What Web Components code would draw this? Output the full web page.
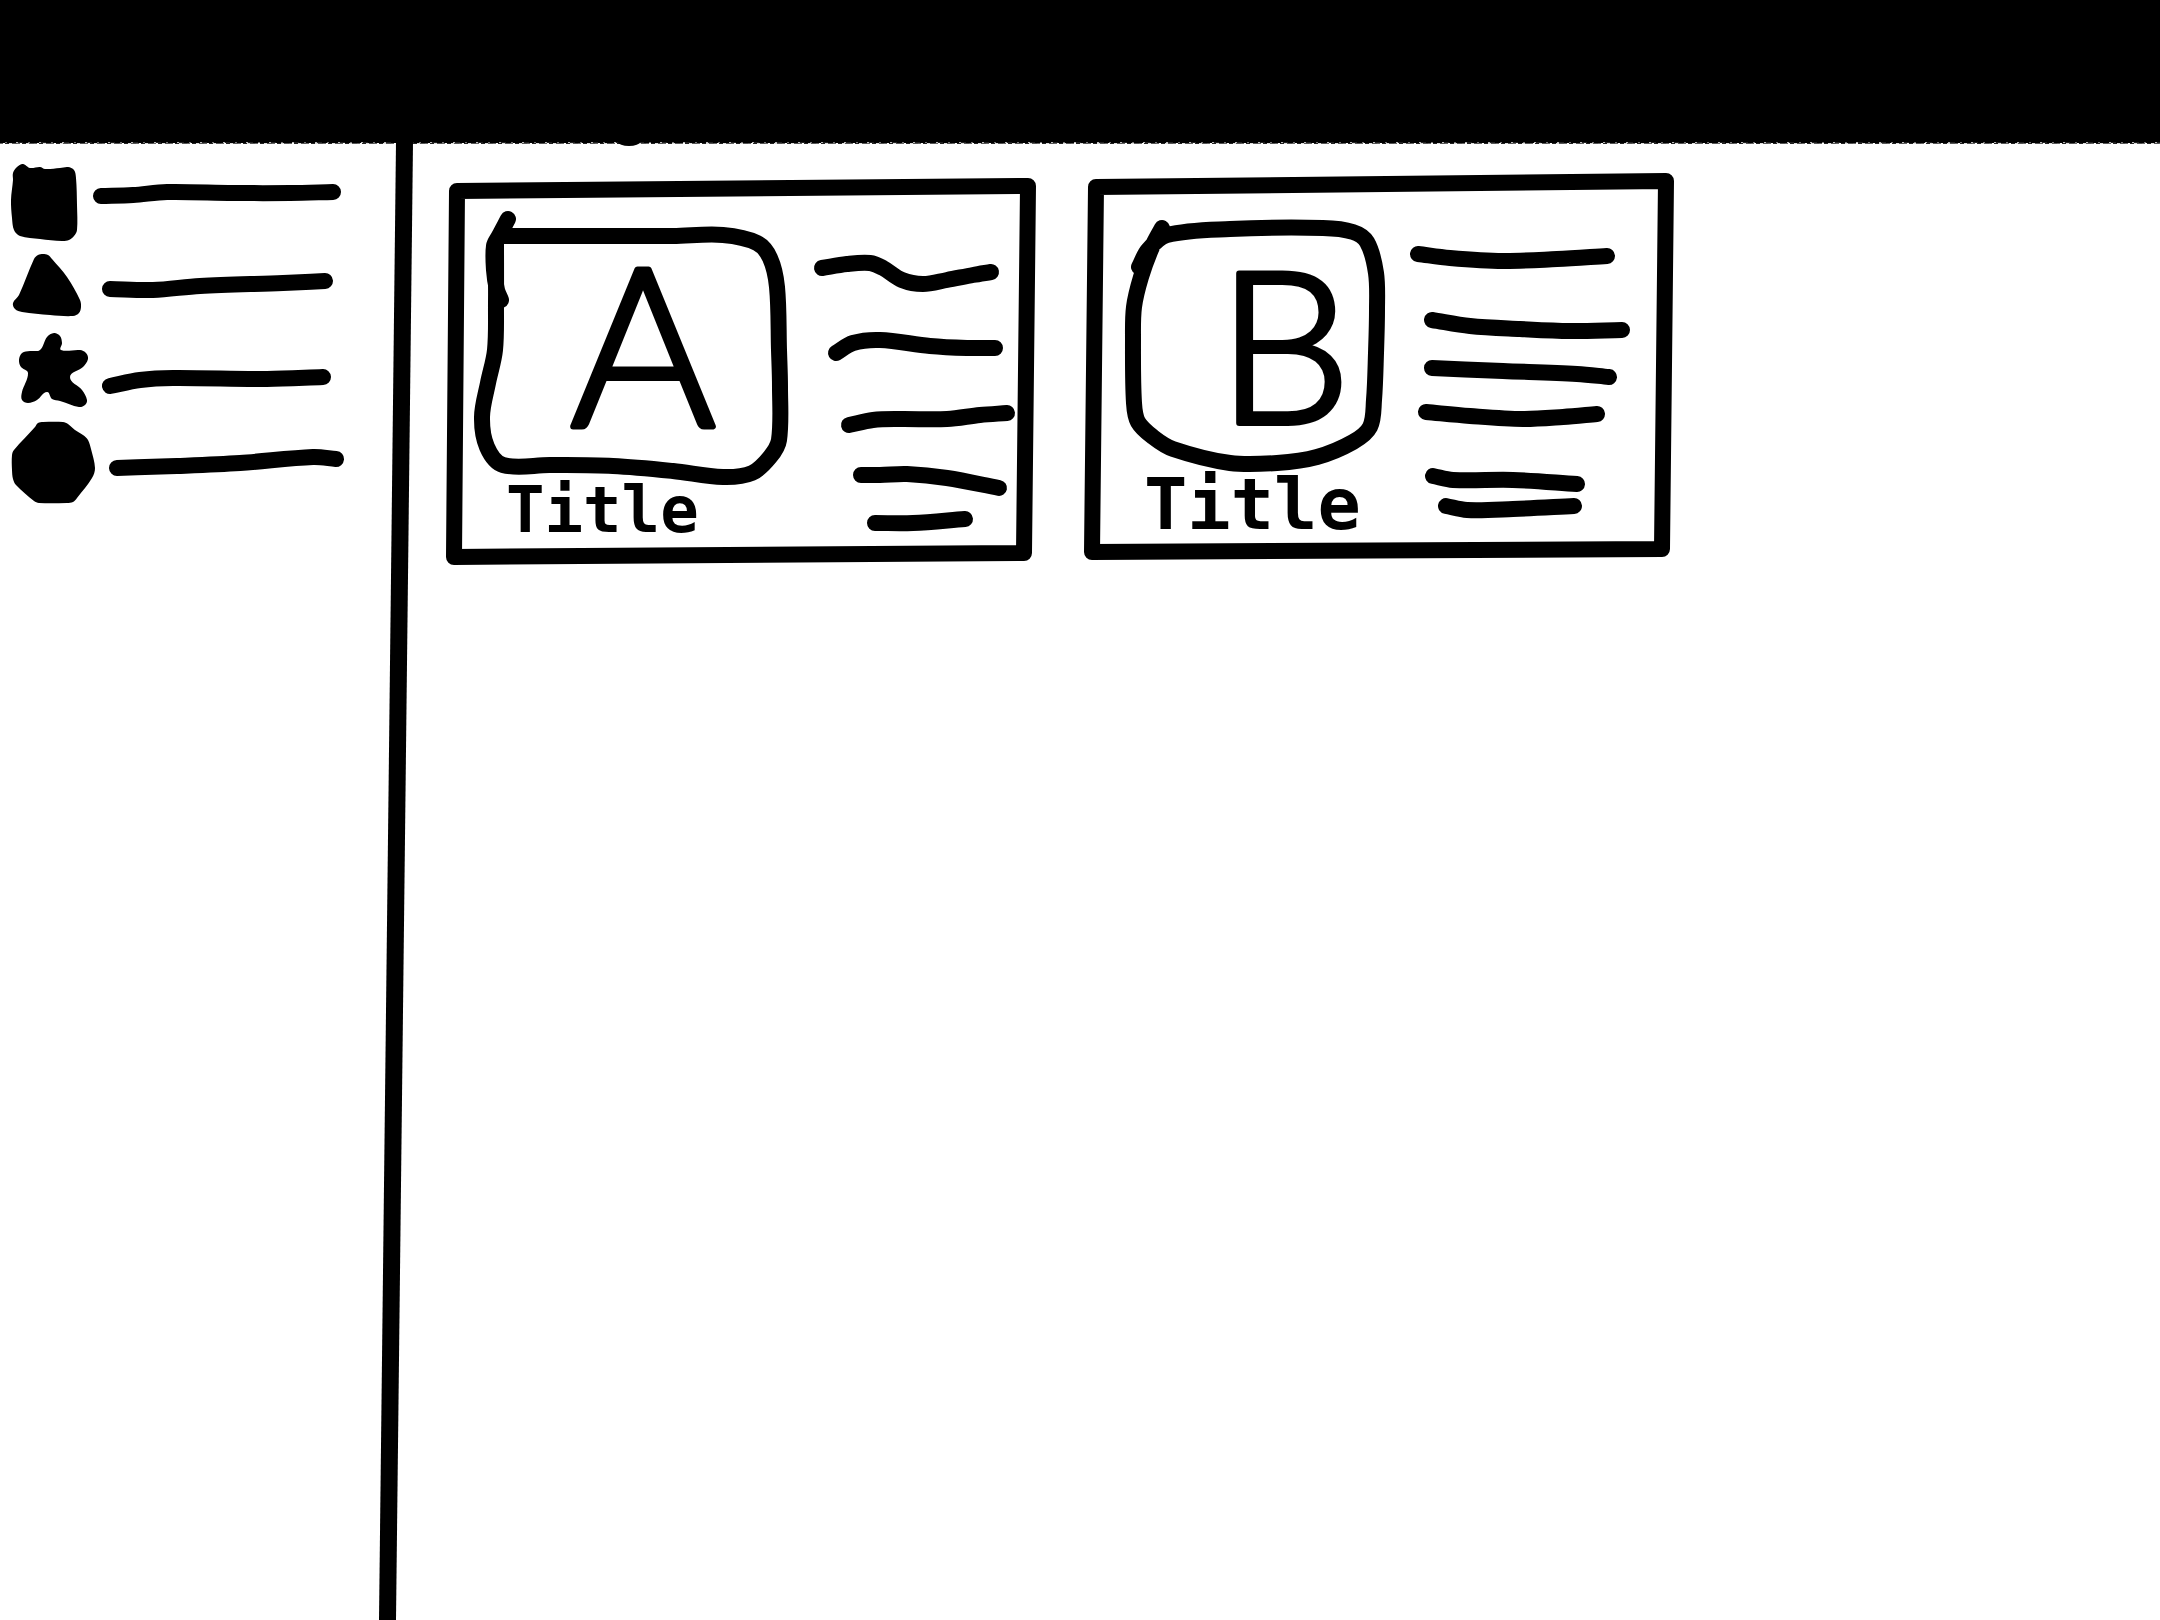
<!DOCTYPE html>
<html lang="en">
<head>
<meta charset="utf-8">
<title>Wireframe</title>
<style>
body { margin: 0; background: #fff; color: #000; font-family: "DejaVu Sans Mono", monospace; }
</style>
</head>
<body>
<wire-page>
  <wire-topbar slot="top"></wire-topbar>
  <wire-item slot="nav">
    <ink-art slot="icon" box="10 160 80 88" fill="13,173 17,167 23,164 30,168 40,167 45,169 60,168 68,167 74,170 76,178 77,205 77,230 74,236 69,240 62,241 40,239 20,236 14,230 12,218 11,200 13,180"></ink-art>
    <ink-art box="90 160 260 88" strokes="101,196 133,195 167,192 233,193 290,193 333,192"></ink-art>
  </wire-item>
  <wire-item slot="nav">
    <ink-art slot="icon" box="10 248 80 76" fill="34,259 38,255 43,254 48,255 52,259 67,277 80,300 81,307 79,313 73,316 50,315 22,312 15,309 13,303 19,295"></ink-art>
    <ink-art box="90 248 260 76" strokes="110,289 153,290 200,286 283,283 325,281"></ink-art>
  </wire-item>
  <wire-item slot="nav">
    <ink-art slot="icon" box="10 324 80 92" fill="40,350 47,337 54,333 60,336 62,343 61,350 80,350 86,353 88,359 83,367 70,377 82,390 87,400 85,405 79,407 60,401 52,399 47,392 37,400 28,403 22,400 22,392 28,373 21,367 19,360 22,353 30,351"></ink-art>
    <ink-art box="90 324 260 92" strokes="110,386 140,380 173,378 267,379 323,377"></ink-art>
  </wire-item>
  <wire-item slot="nav">
    <ink-art slot="icon" box="10 416 80 94" fill="35,427 38,423 43,422 63,422 68,424 75,430 83,435 88,440 91,449 95,468 92,478 77,498 73,502 67,503 39,503 34,501 16,485 13,479 12,470 12,455 14,450"></ink-art>
    <ink-art box="90 416 260 94" strokes="117,468 177,466 240,463 313,457 336,459"></ink-art>
  </wire-item>

  <wire-card>
    <ink-art slot="frame" box="446 174 592 392" outline="457,191 1028,186 1024,553 454,557"></ink-art>
    <ink-art slot="tile" box="474 208 320 276" letter="A" at="643 427" size="222"
      strokes="508,219 499,236 494,246 494,270 497,290 501,300|505,236 560,236 630,236 673,236 723,235 757,243 770,258 777,287 779,350 780,387 779,440 770,457 752,473 723,477 673,471 613,466 550,465 503,465 487,447 482,417 488,383 495,350 496,303 496,243"></ink-art>
    <span slot="title">Title</span>
    <ink-art slot="text" box="810 208 220 340"
      strokes="822,268 847,264 870,263 883,268 902,280 923,284 947,280 973,275 991,272|836,353 853,343 880,340 930,346 967,348 995,348|849,425 873,420 900,419 947,419 980,415 1007,413|861,475 880,475 907,474 947,478 999,488|875,523 913,523 965,519"></ink-art>
  </wire-card>

  <wire-card size="large">
    <ink-art slot="frame" box="1084 174 592 392" outline="1096,187 1666,181 1662,549 1092,552"></ink-art>
    <ink-art slot="tile" box="1112 208 280 270" letter="B" at="1284 423" size="212"
      strokes="1162,228 1152,247 1141,277 1134,307 1133,340 1134,403 1138,422 1153,437 1173,449 1230,463 1277,463 1317,457 1353,442 1370,427 1374,400 1376,353 1377,310 1376,273 1367,242 1353,232 1323,228 1230,229 1167,235 1148,250 1139,267"></ink-art>
    <span slot="title">Title</span>
    <ink-art slot="text" box="1408 208 260 340"
      strokes="1418,254 1450,258 1503,261 1557,259 1607,256|1432,320 1470,326 1520,329 1570,331 1622,330|1432,368 1503,371 1577,374 1609,377|1426,412 1470,416 1523,419 1563,417 1597,414|1433,476 1453,480 1513,480 1577,484|1446,506 1467,510 1513,509 1574,506"></ink-art>
  </wire-card>
</wire-page>

<script>
const parse = text => text.trim().split(/\s+/).map(pair => pair.split(",").map(Number));

/* Smooth curve through a list of points: each handle is a third of its own segment. */
function curve(points, closed) {
  const n = points.length;
  const pick = i => closed ? points[(i + n) % n] : points[Math.max(0, Math.min(n - 1, i))];
  const length = (p, q) => Math.hypot(q[0] - p[0], q[1] - p[1]);
  let d = `M${points[0]}`;
  for (let i = 0; i < (closed ? n : n - 1); i++) {
    const [a, b, c, e] = [pick(i - 1), pick(i), pick(i + 1), pick(i + 2)];
    const reach = length(b, c) / 3, s = reach / length(a, c), t = reach / length(b, e);
    d += `C${b[0] + (c[0] - a[0]) * s} ${b[1] + (c[1] - a[1]) * s} ${c[0] - (e[0] - b[0]) * t} ${c[1] - (e[1] - b[1]) * t} ${c}`;
  }
  return closed ? d + "Z" : d;
}

/* One marker drawing: filled shapes, strokes, or a straight-sided outline. */
customElements.define("ink-art", class extends HTMLElement {
  connectedCallback() {
    const box = this.getAttribute("box");
    const [, , w, h] = box.split(" ");
    let body = "";
    if (this.hasAttribute("fill")) body += `<path class="fill" d="${curve(parse(this.getAttribute("fill")), true)}"/>`;
    if (this.hasAttribute("outline")) body += `<polygon points="${this.getAttribute("outline")}"/>`;
    for (const s of (this.getAttribute("strokes") || "").split("|")) if (s) body += `<path d="${curve(parse(s), false)}"/>`;
    if (this.hasAttribute("letter")) {
      const [x, y] = this.getAttribute("at").split(" ");
      body += `<text x="${x}" y="${y}" font-size="${this.getAttribute("size")}">${this.getAttribute("letter")}</text>`;
    }
    this.attachShadow({ mode: "open" }).innerHTML = `
      <style>
        :host { display: block; flex: none; }
        svg { display: block; overflow: visible; }
        path, polygon { fill: none; stroke: #000; stroke-width: 16px; stroke-linecap: round; stroke-linejoin: round; }
        .fill { fill: #000; stroke: none; }
        text { font-family: Lato, sans-serif; font-weight: 300; text-anchor: middle; stroke: #000; stroke-width: 6px; stroke-linejoin: round; }
      </style>
      <svg width="${w}" height="${h}" viewBox="${box}">${body}</svg>`;
  }
});

function define(name, html) {
  const template = document.createElement("template");
  template.innerHTML = html;
  customElements.define(name, class extends HTMLElement {
    constructor() {
      super();
      this.attachShadow({ mode: "open" }).append(template.content.cloneNode(true));
    }
  });
}

define("wire-topbar", `
  <style>
    :host { display: block; position: relative; height: 142px; background: #000; }
    i { display: block; position: absolute; left: 0; right: 0; top: 142px; height: 2px;
      background:
        repeating-linear-gradient(90deg, #000 0 5px, #777 5px 7px, #000 7px 16px, #bbb 16px 18px, #222 18px 23px) 0 0 / 100% 1px no-repeat,
        repeating-linear-gradient(90deg, #666 0 3px, #fff 3px 5px, #222 5px 9px, #ddd 9px 12px, #555 12px 17px) 0 1px / 100% 1px no-repeat; }
    b { position: absolute; left: 618px; top: 138px; width: 22px; height: 8px; border-radius: 50%; background: #000; }
  </style>
  <i></i><b></b>`);

define("wire-item", `
  <style>
    :host { display: block; }
    a { display: flex; color: inherit; text-decoration: none; }
  </style>
  <a href="#"><slot name="icon"></slot><slot></slot></a>`);

define("wire-card", `
  <style>
    :host { display: grid; --title: 64px; }
    :host([size="large"]) { --title: 72px; }
    ::slotted([slot="frame"]), article { grid-area: 1 / 1; }
    article { display: flex; gap: 16px; padding: 34px 8px 0 28px; }
    h2 { margin: 0; padding-left: 32px; font-size: var(--title); line-height: 52px; font-weight: 700; }
  </style>
  <slot name="frame"></slot>
  <article>
    <div><slot name="tile"></slot><h2><slot name="title"></slot></h2></div>
    <slot name="text"></slot>
  </article>`);

define("wire-page", `
  <style>
    :host { display: flex; flex-direction: column; min-height: 100vh; }
    .body { flex: 1; display: flex; }
    nav { width: 369px; flex: none; padding: 18px 0 0 10px; }
    .rule { width: 34px; flex: none; background: #000; clip-path: polygon(17px 0, 100% 0, 17px 100%, 0 100%); }
    main { flex: 1; display: flex; flex-wrap: wrap; align-content: flex-start; gap: 46px; padding: 32px 33px; }
  </style>
  <slot name="top"></slot>
  <div class="body">
    <nav><slot name="nav"></slot></nav>
    <div class="rule"></div>
    <main><slot></slot></main>
  </div>`);
</script>
</body>
</html>
